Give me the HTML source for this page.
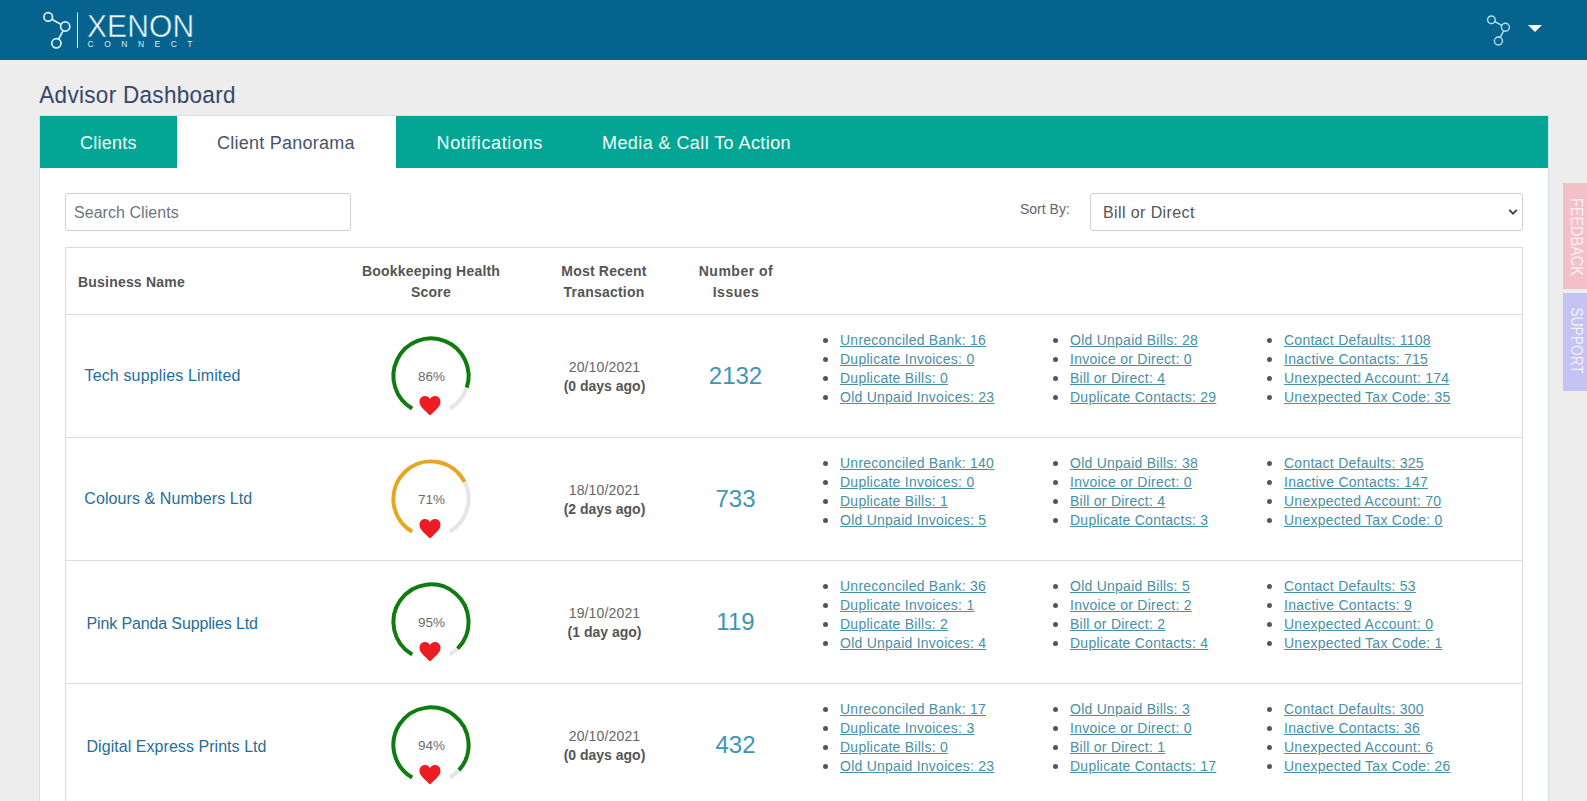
<!DOCTYPE html>
<html><head><meta charset="utf-8">
<style>
*{box-sizing:border-box;margin:0;padding:0}
html,body{width:1587px;height:801px;overflow:hidden;background:#ededed;font-family:"Liberation Sans",sans-serif;position:relative}
.hdr{position:absolute;left:0;top:0;width:1587px;height:60px;background:#06638e}
.xenon{position:absolute;left:87px;top:8.5px;font-size:30px;color:#eef8fc;letter-spacing:0.1px;line-height:36px;transform:scaleY(1.06);transform-origin:0 27px;-webkit-text-stroke:0.45px #06638e}
.connect{position:absolute;left:87.5px;top:39px;font-size:8.5px;color:#d8edf6;letter-spacing:10.5px;line-height:10px}
.title{position:absolute;left:39.3px;top:81px;font-size:22.5px;color:#344769;letter-spacing:0.3px;line-height:30px;transform:scaleY(1.035);transform-origin:0 22px}
.card{position:absolute;left:39px;top:115px;width:1510px;height:720px;background:#fff;border:1px solid #d6e2e6}
.tabbar{position:absolute;left:40px;top:116px;width:1508px;height:52px;background:#03a694}
.tab{position:absolute;top:117px;height:52px;line-height:52px;font-size:18px;color:#f2fffb;letter-spacing:0.25px}
.tab.active{background:#fff;color:#44536e;left:177px;width:219px;top:116px;line-height:54px}
.input{position:absolute;left:65px;top:193px;width:286px;height:38px;border:1px solid #cfcfcf;border-radius:3px;background:#fff}
.ph{position:absolute;left:74px;top:203px;font-size:16px;color:#6c757d;line-height:20px;letter-spacing:0.05px}
.sortby{position:absolute;left:1020px;top:200px;font-size:14px;color:#666;line-height:18px}
.select{position:absolute;left:1090px;top:193px;width:433px;height:38px;border:1px solid #cfcfcf;border-radius:3px;background:#fff}
.selv{position:absolute;left:1103px;top:203px;font-size:16px;color:#555;line-height:20px;letter-spacing:0.4px}
.table{position:absolute;left:65px;top:247px;width:1458px;height:600px;border:1px solid #dcdcdc}
.rowline{position:absolute;left:65px;width:1458px;height:1px;background:#dcdcdc}
.th{position:absolute;font-size:14px;font-weight:bold;color:#555;line-height:21px;text-align:center;letter-spacing:0.2px}
.bname{position:absolute;font-size:16px;color:#246e9b;line-height:18px;white-space:nowrap;letter-spacing:0.12px}
.gauge{position:absolute}
.pct{position:absolute;width:60px;text-align:center;font-size:13.5px;color:#6a6a6a;line-height:16px}
.date{position:absolute;left:544.5px;width:120px;text-align:center;font-size:14px;color:#666;line-height:18.5px;letter-spacing:0.15px}
.date b{color:#555;letter-spacing:0}
.num{position:absolute;left:675.5px;width:120px;text-align:center;font-size:24px;color:#3e96b4;line-height:30px}
ul.lk{position:absolute;list-style:none;font-size:14px;line-height:19px;white-space:nowrap}
ul.lk li{position:relative}
ul.lk li::before{content:"";position:absolute;left:-17px;top:6.5px;width:5px;height:5px;border-radius:50%;background:#555}
ul.lk a{color:#4890a4;text-decoration:underline;letter-spacing:0.25px}
.fb{position:absolute;left:1563px;width:24px;color:#fbeff1}
.fb span{position:absolute;left:6px;writing-mode:vertical-rl;font-size:12px;line-height:14px;white-space:nowrap;letter-spacing:1.6px}
</style></head><body>
<div class="hdr"><svg style="position:absolute;left:0;top:0" width="200" height="60">
<g stroke="#dcf1fa" stroke-width="1.7" fill="none">
<circle cx="48.2" cy="16.9" r="4.3"/><circle cx="65.2" cy="26.5" r="4.6"/><circle cx="56.4" cy="43.3" r="4.6"/>
<line x1="51.8" y1="19.2" x2="61.2" y2="24.4"/><line x1="63.2" y1="30.6" x2="58.4" y2="39.3"/>
</g>
<line x1="77.5" y1="12.5" x2="77.5" y2="48" stroke="#dff3fb" stroke-width="1"/>
</svg><div class="xenon">XENON</div><div class="connect">CONNECT</div><svg style="position:absolute;left:1480px;top:0" width="70" height="60">
<g stroke="#b5e3f7" stroke-width="1.4" fill="none">
<circle cx="11.4" cy="19.8" r="3.8"/><circle cx="25.4" cy="27.3" r="4"/><circle cx="18.4" cy="41" r="4"/>
<line x1="14.8" y1="21.6" x2="21.8" y2="25.4"/><line x1="23.6" y1="31" x2="20.2" y2="37.3"/>
</g>
<path d="M48 25L62 25L55 32Z" fill="#fff"/>
</svg></div>
<div class="title">Advisor Dashboard</div>
<div class="card"></div>
<div class="tabbar"></div>
<div class="tab" style="left:80px">Clients</div>
<div class="tab active"><span style="position:absolute;left:40px">Client Panorama</span></div>
<div class="tab" style="left:436.5px;letter-spacing:0.65px">Notifications</div>
<div class="tab" style="left:602px;letter-spacing:0.42px">Media &amp; Call To Action</div>
<div class="input"></div><div class="ph">Search Clients</div>
<div class="sortby">Sort By:</div>
<div class="select"></div><div class="selv">Bill or Direct</div>
<svg style="position:absolute;left:1507px;top:208px" width="12" height="8"><path d="M2.2 1.8L6 5.6L9.8 1.8" stroke="#444" stroke-width="1.9" fill="none"/></svg>
<div class="table"></div>
<div class="rowline" style="top:314px"></div>
<div class="th" style="left:78px;top:272px">Business Name</div>
<div class="th" style="left:331px;width:200px;top:261px">Bookkeeping Health<br>Score</div>
<div class="th" style="left:514px;width:180px;top:261px">Most Recent<br>Transaction</div>
<div class="th" style="left:676px;width:120px;top:261px;letter-spacing:0.5px">Number of<br>Issues</div>
<div class="rowline" style="top:437px"></div>
<div class="bname" style="left:84.5px;top:367px;letter-spacing:0.145px">Tech supplies Limited</div>
<svg class="gauge" style="left:386px;top:330.5px" width="90" height="90" viewBox="386 330.5 90 90"><path d="M466.76 387.12A37.6 37.6 0 0 1 449.80 408.06" stroke="#e6e6e6" stroke-width="4" fill="none"/><path d="M412.20 408.06A37.6 37.6 0 1 1 466.76 387.12" stroke="#107c10" stroke-width="4" fill="none"/><g transform="translate(419,395.3)"><path d="M11 19.2C10.3 19.2 9.3 18.2 8.5 17.4C5 14 0.5 10.5 0.5 6C0.5 2.7 2.9 0.3 5.9 0.3C8.1 0.3 10 1.5 11 3.1C12 1.5 13.9 0.3 16.1 0.3C19.1 0.3 21.5 2.7 21.5 6C21.5 10.5 17 14 13.5 17.4C12.7 18.2 11.7 19.2 11 19.2Z" fill="#ed1c24"/></g></svg>
<div class="pct" style="left:401.5px;top:368.5px">86%</div>
<div class="date" style="top:358px">20/10/2021<br><b>(0 days ago)</b></div>
<div class="num" style="top:361px">2132</div>
<ul class="lk" style="left:840px;top:331px"><li><a>Unreconciled Bank: 16</a></li><li><a>Duplicate Invoices: 0</a></li><li><a>Duplicate Bills: 0</a></li><li><a>Old Unpaid Invoices: 23</a></li></ul>
<ul class="lk" style="left:1070px;top:331px"><li><a>Old Unpaid Bills: 28</a></li><li><a>Invoice or Direct: 0</a></li><li><a>Bill or Direct: 4</a></li><li><a>Duplicate Contacts: 29</a></li></ul>
<ul class="lk" style="left:1284px;top:331px"><li><a>Contact Defaults: 1108</a></li><li><a>Inactive Contacts: 715</a></li><li><a>Unexpected Account: 174</a></li><li><a>Unexpected Tax Code: 35</a></li></ul><div class="rowline" style="top:560px"></div>
<div class="bname" style="left:84.3px;top:490px;letter-spacing:0.08px">Colours &amp; Numbers Ltd</div>
<svg class="gauge" style="left:386px;top:453.5px" width="90" height="90" viewBox="386 453.5 90 90"><path d="M464.50 481.43A37.6 37.6 0 0 1 449.80 531.06" stroke="#e6e6e6" stroke-width="4" fill="none"/><path d="M412.20 531.06A37.6 37.6 0 1 1 464.50 481.43" stroke="#e9a521" stroke-width="4" fill="none"/><g transform="translate(419,518.3)"><path d="M11 19.2C10.3 19.2 9.3 18.2 8.5 17.4C5 14 0.5 10.5 0.5 6C0.5 2.7 2.9 0.3 5.9 0.3C8.1 0.3 10 1.5 11 3.1C12 1.5 13.9 0.3 16.1 0.3C19.1 0.3 21.5 2.7 21.5 6C21.5 10.5 17 14 13.5 17.4C12.7 18.2 11.7 19.2 11 19.2Z" fill="#ed1c24"/></g></svg>
<div class="pct" style="left:401.5px;top:491.5px">71%</div>
<div class="date" style="top:481px">18/10/2021<br><b>(2 days ago)</b></div>
<div class="num" style="top:484px">733</div>
<ul class="lk" style="left:840px;top:454px"><li><a>Unreconciled Bank: 140</a></li><li><a>Duplicate Invoices: 0</a></li><li><a>Duplicate Bills: 1</a></li><li><a>Old Unpaid Invoices: 5</a></li></ul>
<ul class="lk" style="left:1070px;top:454px"><li><a>Old Unpaid Bills: 38</a></li><li><a>Invoice or Direct: 0</a></li><li><a>Bill or Direct: 4</a></li><li><a>Duplicate Contacts: 3</a></li></ul>
<ul class="lk" style="left:1284px;top:454px"><li><a>Contact Defaults: 325</a></li><li><a>Inactive Contacts: 147</a></li><li><a>Unexpected Account: 70</a></li><li><a>Unexpected Tax Code: 0</a></li></ul><div class="rowline" style="top:683px"></div>
<div class="bname" style="left:86.5px;top:614.7px;letter-spacing:-0.13px">Pink Panda Supplies Ltd</div>
<svg class="gauge" style="left:386px;top:576.5px" width="90" height="90" viewBox="386 576.5 90 90"><path d="M457.59 648.09A37.6 37.6 0 0 1 449.80 654.06" stroke="#e6e6e6" stroke-width="4" fill="none"/><path d="M412.20 654.06A37.6 37.6 0 1 1 457.59 648.09" stroke="#107c10" stroke-width="4" fill="none"/><g transform="translate(419,641.3)"><path d="M11 19.2C10.3 19.2 9.3 18.2 8.5 17.4C5 14 0.5 10.5 0.5 6C0.5 2.7 2.9 0.3 5.9 0.3C8.1 0.3 10 1.5 11 3.1C12 1.5 13.9 0.3 16.1 0.3C19.1 0.3 21.5 2.7 21.5 6C21.5 10.5 17 14 13.5 17.4C12.7 18.2 11.7 19.2 11 19.2Z" fill="#ed1c24"/></g></svg>
<div class="pct" style="left:401.5px;top:614.5px">95%</div>
<div class="date" style="top:604px">19/10/2021<br><b>(1 day ago)</b></div>
<div class="num" style="top:607px">119</div>
<ul class="lk" style="left:840px;top:577px"><li><a>Unreconciled Bank: 36</a></li><li><a>Duplicate Invoices: 1</a></li><li><a>Duplicate Bills: 2</a></li><li><a>Old Unpaid Invoices: 4</a></li></ul>
<ul class="lk" style="left:1070px;top:577px"><li><a>Old Unpaid Bills: 5</a></li><li><a>Invoice or Direct: 2</a></li><li><a>Bill or Direct: 2</a></li><li><a>Duplicate Contacts: 4</a></li></ul>
<ul class="lk" style="left:1284px;top:577px"><li><a>Contact Defaults: 53</a></li><li><a>Inactive Contacts: 9</a></li><li><a>Unexpected Account: 0</a></li><li><a>Unexpected Tax Code: 1</a></li></ul><div class="rowline" style="top:806px"></div>
<div class="bname" style="left:86.5px;top:737.7px;letter-spacing:0.05px">Digital Express Prints Ltd</div>
<svg class="gauge" style="left:386px;top:699.5px" width="90" height="90" viewBox="386 699.5 90 90"><path d="M458.94 769.66A37.6 37.6 0 0 1 449.80 777.06" stroke="#e6e6e6" stroke-width="4" fill="none"/><path d="M412.20 777.06A37.6 37.6 0 1 1 458.94 769.66" stroke="#107c10" stroke-width="4" fill="none"/><g transform="translate(419,764.3)"><path d="M11 19.2C10.3 19.2 9.3 18.2 8.5 17.4C5 14 0.5 10.5 0.5 6C0.5 2.7 2.9 0.3 5.9 0.3C8.1 0.3 10 1.5 11 3.1C12 1.5 13.9 0.3 16.1 0.3C19.1 0.3 21.5 2.7 21.5 6C21.5 10.5 17 14 13.5 17.4C12.7 18.2 11.7 19.2 11 19.2Z" fill="#ed1c24"/></g></svg>
<div class="pct" style="left:401.5px;top:737.5px">94%</div>
<div class="date" style="top:727px">20/10/2021<br><b>(0 days ago)</b></div>
<div class="num" style="top:730px">432</div>
<ul class="lk" style="left:840px;top:700px"><li><a>Unreconciled Bank: 17</a></li><li><a>Duplicate Invoices: 3</a></li><li><a>Duplicate Bills: 0</a></li><li><a>Old Unpaid Invoices: 23</a></li></ul>
<ul class="lk" style="left:1070px;top:700px"><li><a>Old Unpaid Bills: 3</a></li><li><a>Invoice or Direct: 0</a></li><li><a>Bill or Direct: 1</a></li><li><a>Duplicate Contacts: 17</a></li></ul>
<ul class="lk" style="left:1284px;top:700px"><li><a>Contact Defaults: 300</a></li><li><a>Inactive Contacts: 36</a></li><li><a>Unexpected Account: 6</a></li><li><a>Unexpected Tax Code: 26</a></li></ul>
<div class="fb" style="top:183px;height:106px;background:#f2c1c7"><svg width="24" height="106"><text transform="translate(7.5,15) rotate(90) scale(0.85,1)" font-size="17" fill="#fcf0f2" font-family="Liberation Sans">FEEDBACK</text></svg></div>
<div class="fb" style="top:293px;height:98px;background:#c4c3f3"><svg width="24" height="98"><text transform="translate(7.5,14.5) rotate(90) scale(0.81,1)" font-size="17" fill="#f1f1fd" font-family="Liberation Sans">SUPPORT</text></svg></div>
</body></html>
